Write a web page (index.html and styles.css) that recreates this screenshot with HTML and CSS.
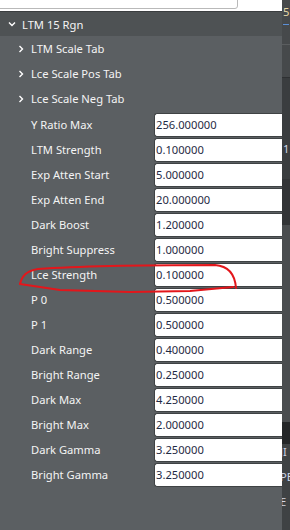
FILE: index.html
```html
<!DOCTYPE html>
<html lang="en">
<head>
  <meta charset="UTF-8">
  <meta name="viewport" content="width=device-width, initial-scale=1.0">
  <title>LTM 15 Rgn</title>
  <link rel="stylesheet" href="styles.css">
</head>
<body>
  <div class="left">
    <div class="topbar">
      <div class="search"></div>
    </div>
    <div class="panel">
      <div class="group-head">
        <svg class="chev" width="8" height="6" viewBox="0 0 8 6"><path d="M1 1.5 L4 4.5 L7 1.5" fill="none" stroke="#fff" stroke-width="1.4"/></svg>
        <span>LTM 15 Rgn</span>
      </div>
      <div class="tree-row">
        <svg class="chev" width="6" height="8" viewBox="0 0 6 8"><path d="M1.5 1 L4.5 4 L1.5 7" fill="none" stroke="#fff" stroke-width="1.4"/></svg>
        <span>LTM Scale Tab</span>
      </div>
      <div class="tree-row">
        <svg class="chev" width="6" height="8" viewBox="0 0 6 8"><path d="M1.5 1 L4.5 4 L1.5 7" fill="none" stroke="#fff" stroke-width="1.4"/></svg>
        <span>Lce Scale Pos Tab</span>
      </div>
      <div class="tree-row">
        <svg class="chev" width="6" height="8" viewBox="0 0 6 8"><path d="M1.5 1 L4.5 4 L1.5 7" fill="none" stroke="#fff" stroke-width="1.4"/></svg>
        <span>Lce Scale Neg Tab</span>
      </div>

      <div class="props">
        <label>Y Ratio Max</label><div class="field">256.000000</div>
        <label>LTM Strength</label><div class="field">0.100000</div>
        <label>Exp Atten Start</label><div class="field">5.000000</div>
        <label>Exp Atten End</label><div class="field">20.000000</div>
        <label>Dark Boost</label><div class="field">1.200000</div>
        <label>Bright Suppress</label><div class="field">1.000000</div>
        <label>Lce Strength</label><div class="field">0.100000</div>
        <label>P 0</label><div class="field">0.500000</div>
        <label>P 1</label><div class="field">0.500000</div>
        <label>Dark Range</label><div class="field">0.400000</div>
        <label>Bright Range</label><div class="field">0.250000</div>
        <label>Dark Max</label><div class="field">4.250000</div>
        <label>Bright Max</label><div class="field">2.000000</div>
        <label>Dark Gamma</label><div class="field">3.250000</div>
        <label>Bright Gamma</label><div class="field">3.250000</div>
      </div>
    </div>
  </div>

  <div class="side">
    <div class="side-a"><span class="frag frag-5">5</span><span class="frag-dash"></span></div>
    <div class="side-b"></div>
    <div class="side-c"><span class="frag frag-1">1</span></div>
    <div class="side-d"></div>
    <div class="side-e"></div>
    <div class="side-f"></div>
    <div class="side-g">
      <span class="frag">JI</span>
      <span class="frag">PE</span>
      <span class="frag">E</span>
    </div>
  </div>

  <!-- red pen mark around Lce Strength -->
  <svg class="markup" width="290" height="530" viewBox="0 0 290 530">
    <g fill="none" stroke="#e3161b" stroke-width="2" stroke-linecap="round">
      <path d="M20 284 C22 276 26 271 38 269 C80 266 160 265 215 265 C229 266 235 275 236 288"/>
      <path d="M20 284 L60 290 L130 292 L190 291 L233 287"/>
    </g>
  </svg>
</body>
</html>
```

FILE: styles.css
```css
body {
  margin: 0;
  width: 290px;
  height: 530px;
  overflow: hidden;
  position: relative;
  display: flex;
  background: #3c3f41;
  font-family: "Noto Sans", "Open Sans", sans-serif;
  font-size: 11.2px;
}
.left {
  width: 282px;
  display: flex;
  flex-direction: column;
}
.topbar {
  height: 11px;
  background: #fff;
  overflow: hidden;
  border-bottom: 1px solid #3a3d3f;
}
.search {
  margin-left: -10px;
  width: 246px;
  height: 14px;
  margin-top: -7px;
  border: 1px solid #b9b9b9;
  border-radius: 3px;
}
.panel {
  flex: 1;
  background: #5b5f62;
  color: #f4f4f4;
  overflow: hidden;
}
.group-head {
  height: 24px;
  background: #4e5254;
  display: flex;
  align-items: center;
  padding-left: 8px;
  gap: 6px;
}
.tree-row {
  height: 25px;
  display: flex;
  align-items: center;
  padding-left: 18px;
  gap: 7px;
}
.chev {
  display: block;
}
.props {
  display: grid;
  grid-template-columns: 154px 128px;
  grid-auto-rows: 25px;
  padding-top: 1px;
}
.props label {
  padding-left: 31px;
  line-height: 25px;
}
.field {
  margin-top: 1px;
  height: 24px;
  box-sizing: border-box;
  border: 1px solid #3f4244;
  border-right: none;
  border-radius: 3px 0 0 3px;
  background: #fff;
  color: #1f2a44;
  padding-left: 1px;
  line-height: 22px;
  font-size: 11.2px;
}
.side {
  width: 8px;
  display: flex;
  flex-direction: column;
  overflow: hidden;
  color: #cfd8e8;
}
.frag {
  display: block;
  height: 25px;
  line-height: 12px;
  margin-left: -2px;
  white-space: nowrap;
}
.side-a {
  height: 45px;
  background: #46494b;
  border-bottom: 1px solid #5a5d5f;
  padding-top: 6px;
  box-sizing: border-box;
}
.frag-5 {
  height: 12px;
  margin-left: 1px;
  color: #e8d9a8;
}
.frag-dash {
  display: block;
  width: 6px;
  height: 1px;
  margin-top: 6px;
  margin-left: 1px;
  background: #5b8fd6;
}
.side-b {
  height: 32px;
  background: #46494b;
  border-bottom: 1px solid #2f3133;
}
.side-c {
  height: 101px;
  background: #3a3d3f;
  padding-top: 65px;
  box-sizing: border-box;
}
.frag-1 {
  margin-left: 1px;
}
.side-d {
  height: 46px;
  background: #323436;
}
.side-e {
  height: 197px;
  background: #4a4d4f;
}
.side-f {
  height: 22px;
  background: #242628;
}
.side-g {
  flex: 1;
  background: #3f4244;
  padding-top: 2px;
}
.markup {
  position: absolute;
  left: 0;
  top: 0;
  pointer-events: none;
}
```
